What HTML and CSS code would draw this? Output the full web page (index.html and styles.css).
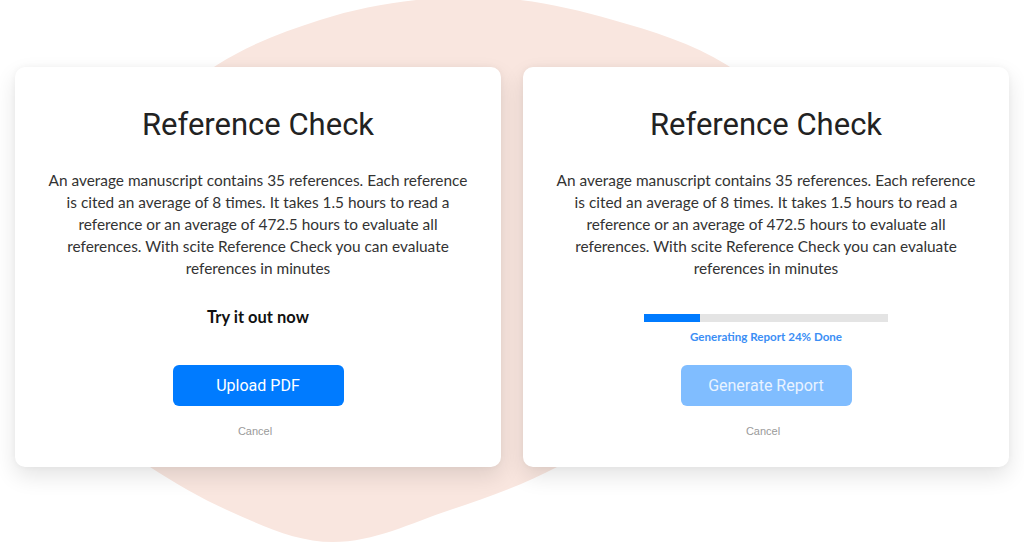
FILE: index.html
```html
<!DOCTYPE html>
<html lang="en">
<head>
<meta charset="utf-8">
<title>Reference Check</title>
<link rel="stylesheet" href="styles.css">
</head>
<body>
<div class="stage">
  <svg class="blob" width="1024" height="542" viewBox="0 0 1024 542" aria-hidden="true">
    <path fill="#f9e6df" d="M474,-3 C521,-3 568,7 613,20 C652,31 692,43 727,65 C778,97 800,170 800,230 C800,343 657,414 557,467 C523,485 486,498 450,510 C411,523 374,542 333,542 C296,542 261,525 227,510 C200,498 175,483 150,467 C89,429 60,342 60,270 C60,184 144,111 217,65 C248,45 285,31 320,20 C370,4 422,-3 474,-3 Z"/>
  </svg>
  <div class="cards">
    <section class="card">
      <h1 class="title">Reference Check</h1>
      <p class="desc">An average manuscript contains 35 references. Each reference<br>is cited an average of 8 times. It takes 1.5 hours to read a<br>reference or an average of 472.5 hours to evaluate all<br>references. With scite Reference Check you can evaluate<br>references in minutes</p>
      <p class="try">Try it out now</p>
      <button class="btn btn-primary">Upload PDF</button>
      <a class="cancel">Cancel</a>
    </section>
    <section class="card">
      <h1 class="title">Reference Check</h1>
      <p class="desc">An average manuscript contains 35 references. Each reference<br>is cited an average of 8 times. It takes 1.5 hours to read a<br>reference or an average of 472.5 hours to evaluate all<br>references. With scite Reference Check you can evaluate<br>references in minutes</p>
      <div class="progress"><div class="progress-fill" style="width: 23%"></div></div>
      <p class="status">Generating Report 24% Done</p>
      <button class="btn btn-disabled">Generate Report</button>
      <a class="cancel">Cancel</a>
    </section>
  </div>
</div>
</body>
</html>
```
FILE: styles.css
```css
* { box-sizing: border-box; }
html, body { margin: 0; padding: 0; background: #ffffff; }
.stage {
  position: relative;
  width: 1024px;
  height: 542px;
  overflow: hidden;
}
.blob {
  position: absolute;
  left: 0;
  top: 0;
}
.cards {
  position: relative;
  display: flex;
  gap: 22px;
  padding: 67px 15px 0 15px;
}
.card {
  width: 486px;
  height: 400px;
  background: #ffffff;
  border-radius: 10px;
  box-shadow: 0 9px 22px rgba(0, 0, 0, 0.11), 0 0 6px rgba(0, 0, 0, 0.04);
  display: flex;
  flex-direction: column;
  align-items: center;
  padding-top: 41px;
}
.title {
  margin: 0;
  font-family: Roboto, "Liberation Sans", sans-serif;
  font-weight: 400;
  font-size: 31px;
  line-height: 34px;
  color: #222222;
}
.desc {
  margin: 27px 0 0 0;
  width: 460px;
  text-align: center;
  white-space: nowrap;
  font-family: Lato, "Noto Sans", sans-serif;
  font-size: 15.4px;
  line-height: 22px;
  color: #333333;
}
.try {
  margin: 28px 0 0 0;
  font-family: Lato, "Noto Sans", sans-serif;
  font-weight: 700;
  font-size: 16.5px;
  line-height: 20px;
  color: #111111;
}
.btn {
  width: 171px;
  height: 41px;
  border: none;
  border-radius: 6px;
  font-family: Roboto, "Liberation Sans", sans-serif;
  font-size: 16px;
  color: #ffffff;
  padding: 0;
}
.try + .btn { margin-top: 38px; }
.btn-primary { background: #007bff; }
.btn-disabled { background: #80bdff; color: #e9f3ff; margin-top: 21px; }
.progress {
  margin-top: 35px;
  width: 244px;
  height: 8px;
  background: #e4e4e4;
}
.progress-fill {
  height: 100%;
  background: #007bff;
}
.status {
  margin: 8px 0 0 0;
  font-family: Lato, "Noto Sans", sans-serif;
  font-weight: 700;
  font-size: 11.6px;
  line-height: 14px;
  color: #3b8ef5;
}
.cancel {
  margin: 18px 6px 0 0;
  font-family: "Liberation Sans", Arial, sans-serif;
  font-size: 11px;
  line-height: 14px;
  color: #9a9a9a;
}
```
